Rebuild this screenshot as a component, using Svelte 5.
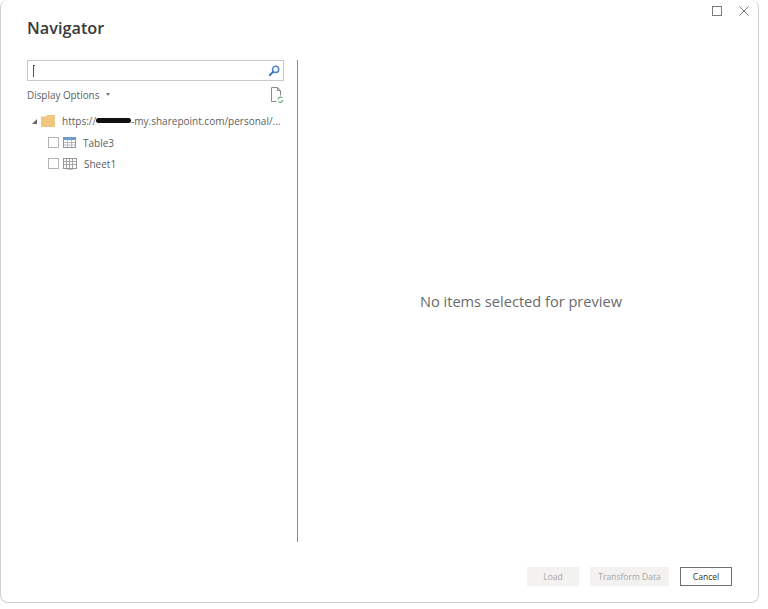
<script lang="ts">
  let query = '';
  const items = [
    { name: 'Table3', kind: 'table' },
    { name: 'Sheet1', kind: 'sheet' }
  ];
</script>

<div class="window">
  <div class="controls">
    <button class="ctl" aria-label="Maximize">
      <svg width="10" height="10" viewBox="0 0 10 10"><rect x="0.5" y="0.5" width="9" height="9" fill="none" stroke="#7a7a7a" /></svg>
    </button>
    <button class="ctl" aria-label="Close">
      <svg width="10" height="10" viewBox="0 0 10 10"><path d="M0.5 0.5l9 9M9.5 0.5l-9 9" fill="none" stroke="#7a7a7a" /></svg>
    </button>
  </div>

  <h1>Navigator</h1>

  <div class="body">
    <aside class="left">
      <div class="search">
        <span class="caret"></span>
        <input bind:value={query} aria-label="Search" />
        <svg width="12" height="12" viewBox="0 0 12 12">
          <circle cx="7.6" cy="4.4" r="3.1" fill="none" stroke="#4a84c0" stroke-width="1.5" />
          <path d="M5.4 6.6L1.2 10.8" stroke="#3a75ad" stroke-width="2" />
        </svg>
      </div>

      <div class="options">
        <span class="display">Display Options</span>
        <span class="arrow"></span>
        <svg class="refresh" width="14" height="16" viewBox="0 0 14 16">
          <path d="M1.5 0.5h6l3 3v5M7.5 0.5v3h3M1.5 0.5v14h5" fill="none" stroke="#8a8a8a" />
          <path d="M8 12.500a2.600 2.600 0 0 1 4.400-1.600M12.800 13a2.600 2.600 0 0 1-4.400 1.600" fill="none" stroke="#6fae86" stroke-width="1.200" />
        </svg>
      </div>

      <div class="tree">
        <div class="row root">
          <span class="twist"></span>
          <svg class="folder" width="14" height="12" viewBox="0 0 14 12"><path d="M0 1.500h5l1-1.500h8v12H0z" fill="#f0c77f" /></svg>
          <span class="url">https://<span class="blot"></span>-my.sharepoint.com/personal/...</span>
        </div>
        {#each items as item}
          <div class="row child">
            <span class="check"></span>
            {#if item.kind === 'table'}
              <svg class="icon" width="13" height="11" viewBox="0 0 13 11">
                <rect x="0.500" y="0.500" width="12" height="10" fill="#fff" stroke="#8a98a8" />
                <rect x="0.500" y="0.500" width="12" height="2.500" fill="#6d9bcc" />
                <path d="M4.500 3v7M8.500 3v7M1 5.500h11M1 8h11" stroke="#b4bdc8" />
              </svg>
            {:else}
              <svg class="icon" width="14" height="12" viewBox="0 0 14 12">
                <rect x="0.500" y="0.500" width="13" height="10" fill="#fff" stroke="#969696" />
                <path d="M3.500 1v9M6.500 1v9M9.500 1v9M1 3.500h12M1 6.500h12" stroke="#a8a8a8" />
                <path d="M4 11.500h6" stroke="#c5c5c5" />
              </svg>
            {/if}
            <span class="label">{item.name}</span>
          </div>
        {/each}
      </div>
    </aside>

    <main class="preview">No items selected for preview</main>
  </div>

  <footer>
    <button class="btn" disabled style="width:52px">Load</button>
    <button class="btn" disabled style="width:79px">Transform Data</button>
    <button class="btn cancel" style="width:52px">Cancel</button>
  </footer>
</div>

<style>
  :global(body) {
    margin: 0;
    background: #fff;
    font-family: "Open Sans", "Noto Sans", sans-serif;
  }

  .window {
    position: relative;
    box-sizing: border-box;
    width: 759px;
    height: 603px;
    border: 1px solid #cfcfcf;
    border-top: none;
    border-radius: 8px;
    display: flex;
    flex-direction: column;
    padding: 0 26px;
  }

  .controls {
    position: absolute;
    top: 6px;
    right: 4px;
    display: flex;
    gap: 7px;
  }

  .ctl {
    width: 20px;
    height: 10px;
    padding: 0;
    border: none;
    background: none;
    display: flex;
    justify-content: center;
    align-items: flex-start;
  }

  h1 {
    margin: 17px 0 0;
    height: 43px;
    font-size: 16.300px;
    line-height: 23px;
    font-weight: 600;
    color: #3a3a3a;
  }

  .body {
    display: flex;
    height: 482px;
  }

  .left {
    width: 257px;
    flex: none;
    margin-right: 13px;
  }

  .search {
    box-sizing: border-box;
    height: 21px;
    border: 1px solid #c8c8c8;
    display: flex;
    align-items: center;
    padding: 0 3px 0 5px;
  }

  .caret {
    width: 2px;
    height: 12px;
    border-left: 1px solid #555;
    border-top: 1px solid #555;
    box-sizing: border-box;
  }

  .search input {
    flex: 1;
    min-width: 0;
    border: none;
    outline: none;
    padding: 0;
    background: none;
  }

  .options {
    display: flex;
    align-items: center;
    height: 28px;
    font-size: 9.900px;
    color: #5e5e5e;
  }

  .arrow {
    margin-left: 7px;
    margin-top: -2px;
    border-left: 2.500px solid transparent;
    border-right: 2.500px solid transparent;
    border-top: 3px solid #777;
  }

  .refresh {
    margin-left: auto;
  }

  .tree {
    margin-top: 1px;
  }

  .row {
    display: flex;
    align-items: center;
    height: 21px;
    font-size: 10px;
    color: #5e5e5e;
    white-space: nowrap;
  }

  .root {
    height: 22px;
    padding-left: 5px;
  }

  .twist {
    flex: none;
    width: 0;
    height: 0;
    border-style: solid;
    border-width: 0 0 5px 5px;
    border-color: transparent transparent #666 transparent;
    margin-right: 4px;
  }

  .folder,
  .icon {
    flex: none;
  }

  .url {
    margin-left: 7px;
  }

  .blot {
    background: #111;
    border-radius: 3px;
    display: inline-block;
    height: 5px;
    width: 35px;
    vertical-align: 2px;
  }

  .child {
    padding-left: 21px;
  }

  .check {
    box-sizing: border-box;
    width: 11px;
    height: 11px;
    border: 1px solid #b4b4b4;
    background: #fff;
    margin-right: 4px;
  }

  .label {
    margin-left: 7px;
  }

  .preview {
    flex: 1;
    border-left: 1px solid #8c8c8c;
    display: flex;
    align-items: center;
    justify-content: center;
    font-size: 14.600px;
    color: #6a6a6a;
    padding-left: 12px;
  }

  footer {
    display: flex;
    justify-content: flex-end;
    gap: 11px;
    margin-top: 25px;
  }

  .btn {
    box-sizing: border-box;
    height: 19px;
    padding: 0;
    border: 1px solid #f3f2f1;
    background: #f3f2f1;
    color: #a5a5a5;
    font-family: inherit;
    font-size: 8.500px;
    white-space: nowrap;
  }

  .cancel {
    background: #fff;
    border-color: #6f6f6f;
    color: #333;
  }
</style>
